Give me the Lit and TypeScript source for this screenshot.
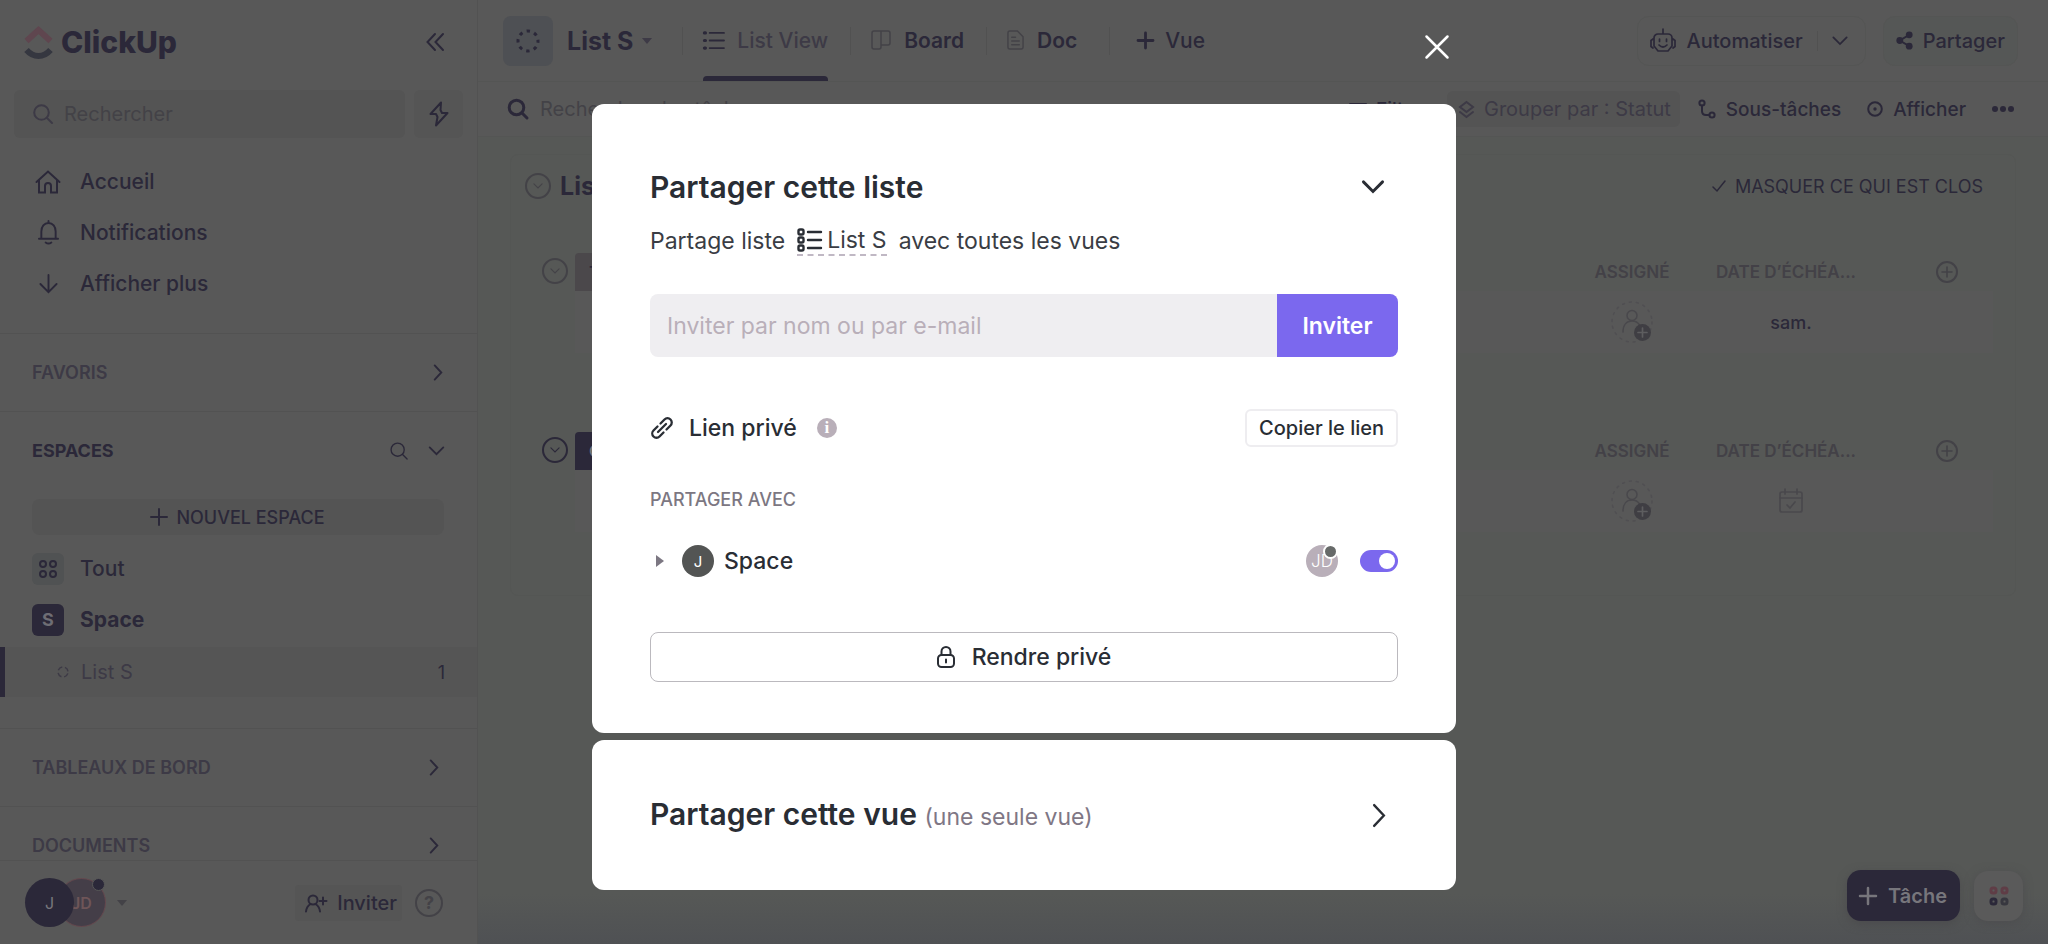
import { LitElement, html, css, svg } from "lit";
import { customElement, property, state } from "lit/decorators.js";
import { classMap } from "lit/directives/class-map.js";

/* Stroke icons, each drawn on its own view box. */
const ICONS: Record<string, { box: string; body: unknown }> = {
  collapse: { box: "0 0 18 18", body: svg`<path d="M9 1 1.500 9 9 17M17 1 9.500 9 17 17"/>` },
  search: { box: "0 0 20 20", body: svg`<circle cx="8.500" cy="8.500" r="7.300"/><path d="m14 14 5 5"/>` },
  bolt: { box: "0 0 20 26", body: svg`<path d="M12 1.500 1.500 13H7l1.500 3-1.500 8.500L18.500 12H13l-1.500-3z" stroke-linejoin="round"/>` },
  home: { box: "0 0 26 24", body: svg`<path d="M1.500 12 13 1.500 24.500 12M4 10v12.500h6V16c0-2 1.200-3 3-3s3 1 3 3v6.500h6V10"/>` },
  bell: { box: "0 0 22 26", body: svg`<path d="M1 19.500h20M3.500 19V12c0-5 3-9 7.500-9s7.500 4 7.500 9v7M11 3V1M8 23.500c2 1.500 4 1.500 6 0"/>` },
  down: { box: "0 0 20 20", body: svg`<path d="M10 1v17.500M1.500 10.500 10 19l8.500-8.500"/>` },
  right: { box: "0 0 10 18", body: svg`<path d="M1.500 1.500 8.500 9l-7 7.500"/>` },
  chevron: { box: "0 0 18 11", body: svg`<path d="m1.500 1.500 7.500 7.500 7.500-7.500"/>` },
  plus: { box: "0 0 16 16", body: svg`<path d="M8 0v16M0 8h16"/>` },
  grid: { box: "0 0 18 18", body: svg`<circle cx="4" cy="4" r="3"/><circle cx="14" cy="4" r="3"/><circle cx="4" cy="14" r="3"/><circle cx="14" cy="14" r="3"/>` },
  ring: { box: "0 0 24 24", body: svg`<circle cx="12" cy="12" r="10" stroke-linecap="butt" stroke-dasharray="3.400 4.454" stroke-dashoffset="1.700"/>` },
  ringSmall: { box: "0 0 12 12", body: svg`<circle cx="6" cy="6" r="5" stroke-linecap="butt" stroke-dasharray="5 2.854" stroke-dashoffset="6.400"/>` },
  list: { box: "0 0 22 20", body: svg`<path d="M7 2h15M7 10h15M7 18h15"/><path d="M1.500 2h1M1.500 10h1M1.500 18h1" stroke-width="3.400"/>` },
  board: { box: "0 0 20 20", body: svg`<path d="M10 1H3a2 2 0 0 0-2 2v14a2 2 0 0 0 2 2h5a2 2 0 0 0 2-2V1h7a2 2 0 0 1 2 2v10a2 2 0 0 1-2 2h-7"/>` },
  doc: { box: "0 0 18 21" , body: svg`<path d="M3 1h8l6 6v11a2 2 0 0 1-2 2H3a2 2 0 0 1-2-2V3a2 2 0 0 1 2-2zM5 7.500h4M5 11.500h8M5 15.500h8"/>` },
  robot: { box: "0 0 26 24", body: svg`<path d="M13 0v5M8 5h10a4 4 0 0 1 4 4v8l-4 5H8l-4-5V9a4 4 0 0 1 4-4zM3 10 1 11.500v6L3 19M23 10l2 1.500v6L23 19M9.500 10v2.500M16.500 10v2.500M9 16c2.500 2.500 5.500 2.500 8 0"/>` },
  share: { box: "0 0 18 20", body: svg`<path d="M14 4 4 10l10 6"/><g fill="currentColor" stroke="none"><circle cx="14" cy="4" r="3.600"/><circle cx="4" cy="10" r="3.600"/><circle cx="14" cy="16" r="3.600"/></g>` },
  filter: { box: "0 0 16 12", body: svg`<path d="M0 1h16M3 6h10M6 11h4"/>` },
  layers: { box: "0 0 15 17", body: svg`<path d="M7.500 1 14 6l-6.500 5L1 6zM1 11l6.500 5 6.500-5"/>` },
  branch: { box: "0 0 18 20", body: svg`<circle cx="4" cy="4" r="2.600"/><circle cx="14" cy="16" r="2.600"/><path d="M4 6.600V12c0 3 1.500 4 4 4h3.400"/>` },
  eye: { box: "0 0 16 16", body: svg`<circle cx="8" cy="8" r="6.800"/><circle cx="8" cy="8" r="1.700" fill="currentColor" stroke="none"/>` },
  dots: { box: "0 0 22 6", body: svg`<g fill="currentColor" stroke="none"><circle cx="3" cy="3" r="3"/><circle cx="11" cy="3" r="3"/><circle cx="19" cy="3" r="3"/></g>` },
  check: { box: "0 0 14 12", body: svg`<path d="m1 7 4 4 8-10"/>` },
  calendar: { box: "0 0 24 24", body: svg`<rect x="1" y="3" width="22" height="20" rx="2"/><path d="M1 9h22M6 0v5M18 0v5M8 16l3 3 5-6"/>` },
  person: { box: "0 0 42 42", body: svg`<circle cx="21" cy="21" r="20" stroke-dasharray="2 5" stroke="#504f52"/><circle cx="21" cy="14.500" r="5"/><path d="M12 31c0-7 3.500-11 9-11 3.500 0 6 1.500 7.500 4"/>` },
  invite: { box: "0 0 22 18", body: svg`<circle cx="8" cy="6" r="4.500"/><path d="M1 17.500c.5-4 2-6 4.500-7.500M15 17.500c-.5-4-2-6-4.500-7.500M14.500 7h7M18 3.500v7"/>` },
  close: { box: "0 0 24 24", body: svg`<path d="m1.500 1.500 21 21M22.500 1.500l-21 21"/>` },
  bullets: { box: "0 0 24 24", body: svg`<rect x="1.500" y="1.500" width="5" height="5" rx="1.500"/><rect x="1.500" y="9.500" width="5" height="5" rx="1.500"/><rect x="1.500" y="17.500" width="5" height="5" rx="1.500"/><path d="M11 4h13M11 12h13M11 20h13"/>` },
  link: { box: "0 0 24 24", body: svg`<path d="m8 16 8-8M10.500 7.500l4-4a4.200 4.200 0 0 1 6 6l-4 4M13.500 16.500l-4 4a4.200 4.200 0 0 1-6-6l4-4"/>` },
  lock: { box: "0 0 18 22", body: svg`<rect x="1" y="9" width="16" height="12" rx="3.500"/><path d="M4.500 9V5.500a4.500 4.500 0 0 1 9 0V9M9 13.500v3"/>` },
};

const icon = (name: string, width: number, height: number, stroke = 2) => html`<svg
  width=${width} height=${height} viewBox=${ICONS[name].box} fill="none" stroke="currentColor"
  stroke-width=${stroke} stroke-linecap="round" aria-hidden="true">${ICONS[name].body}</svg>`;

const base = css`
  * { box-sizing: border-box; margin: 0; }
  :host {
    box-sizing: border-box;
    display: block;
    --ink: #2b2839;
    --soft: #3d3a46;
    --faint: #434247;
    --pane: #585858;
    --line: #525252;
    --accent: #7b68ee;
    font-family: Inter, "Open Sans", sans-serif;
    color: var(--ink);
  }
  button, input { font: inherit; color: inherit; border: 0; background: none; padding: 0; }
  button { display: flex; align-items: center; cursor: pointer; white-space: nowrap; }
  a { color: inherit; text-decoration: none; }
  svg { display: block; flex: none; overflow: visible; }
  .grow { flex: 1; min-width: 0; }
`;

@customElement("side-bar")
class SideBar extends LitElement {
  static styles = [base, css`
    :host { height: 100%; background: var(--pane); border-right: 1px solid var(--line); min-width: 0; }
    .bar { display: flex; flex-direction: column; height: 100%; }
    .scroll { flex: 1; min-height: 0; overflow: hidden; }
    .brand { display: flex; align-items: center; justify-content: space-between; height: 84px; padding: 0 33px 0 24px; }
    .logo { display: flex; align-items: center; gap: 8px; font-size: 30px; line-height: 36px; font-weight: 800; }
    .search { display: flex; gap: 9px; height: 48px; margin: 6px 14px 18px; }
    .field { display: flex; align-items: center; flex: 1; min-width: 0; gap: 11px; padding: 0 19px; border-radius: 6px; background: #545454; color: var(--soft); font-size: 20px; }
    .field input { flex: 1; min-width: 0; outline: 0; }
    .field input::placeholder { color: #434247; opacity: 1; }
    .zap { width: 49px; justify-content: center; border-radius: 6px; background: #555; }
    .item { display: flex; align-items: center; height: 51px; padding: 0 32px; gap: 16px; font-size: 21px; font-weight: 500; }
    .slot { display: flex; justify-content: center; align-items: center; width: 32px; height: 32px; border-radius: 6px; flex: none; }
    .all { background: #505253; }
    .initial { background: var(--ink); color: #6e6d74; font-size: 18px; font-weight: 700; }
    .strong { font-weight: 700; }
    .nav { padding-bottom: 24px; }
    .section { display: flex; align-items: center; gap: 20px; width: 100%; height: 78px; padding: 0 34px 0 32px; border-top: 1px solid var(--line); font-size: 18px; font-weight: 600; color: var(--soft); }
    .section svg { color: var(--ink); }
    .low { padding-right: 38px; }
    .open { padding-right: 32px; color: var(--ink); font-weight: 700; }
    .new { width: calc(100% - 65px); margin: 10px 32px 8px; height: 36px; justify-content: center; gap: 9px; border-radius: 8px; background: #545454; font-size: 18px; font-weight: 500; }
    .current { display: flex; align-items: center; gap: 12px; height: 50px; margin: 2px 0 31px; padding: 0 32px 0 52px; border-left: 5px solid var(--ink); background: #555; color: var(--soft); font-size: 20px; }
    .count { font-size: 18px; color: var(--ink); }
    .foot { display: flex; align-items: center; height: 84px; padding: 0 34px 0 25px; border-top: 1px solid var(--line); }
    .faces { display: flex; align-items: center; position: relative; font-size: 16px; }
    .me, .other { display: grid; place-items: center; width: 49px; height: 49px; border-radius: 50%; }
    .me { background: var(--ink); color: #77767c; z-index: 1; }
    .other { margin-left: -17px; background: #443e48; color: #6e5558; border: 1px solid #65484e; font-weight: 600; }
    .dot { position: absolute; z-index: 1; top: 0; right: 1px; width: 13px; height: 13px; border-radius: 50%; background: var(--ink); border: 1px solid var(--pane); }
    .caret { border: 5px solid transparent; border-top: 6px solid var(--faint); border-bottom: 0; margin-left: 11px; }
    .invite { height: 36px; padding: 0 5px 0 10px; gap: 10px; background: #555; font-size: 20px; font-weight: 500; border-radius: 4px; }
    .help { width: 28px; height: 28px; justify-content: center; margin-left: 13px; border: 2px solid var(--faint); border-radius: 50%; color: var(--faint); font-size: 18px; font-weight: 700; }
  `];

  render() {
    const nav: [string, string, number, number][] = [
      ["home", "Accueil", 26, 24], ["bell", "Notifications", 21, 25], ["down", "Afficher plus", 19, 19],
    ];
    return html`<nav class="bar">
      <div class="scroll">
        <div class="brand">
          <a class="logo" href="#">
            <svg width="29" height="36" viewBox="0 0 29 36" fill="none" stroke-width="6">
              <path d="M2.500 17 14.500 6l12 11" stroke="#5f464f"/>
              <path d="M2.500 26c7 8 17 8 24 0" stroke="#353740"/>
            </svg>
            <span>ClickUp</span>
          </a>
          <button aria-label="Réduire">${icon("collapse", 18, 18)}</button>
        </div>
        <div class="search">
          <label class="field">${icon("search", 20, 20)}<input type="search" placeholder="Rechercher" aria-label="Rechercher" /></label>
          <button class="zap" aria-label="Actions rapides">${icon("bolt", 20, 26)}</button>
        </div>
        <div class="nav">
          ${nav.map(([name, label, w, h]) => html`<a class="item" href="#"><span class="slot">${icon(name, w, h)}</span>${label}</a>`)}
        </div>
        <button class="section"><span>FAVORIS</span><span class="grow"></span>${icon("right", 10, 17)}</button>
        <div class="section open"><span class="grow">ESPACES</span>
          <button aria-label="Rechercher un espace">${icon("search", 18, 18, 1.5)}</button>
          <button aria-label="Replier">${icon("chevron", 17, 10)}</button></div>
        <button class="new">${icon("plus", 16, 16)}NOUVEL ESPACE</button>
        <a class="item" href="#"><span class="slot all">${icon("grid", 18, 18)}</span>Tout</a>
        <a class="item strong" href="#"><span class="slot initial">S</span>Space</a>
        <a class="current" href="#">${icon("ringSmall", 12, 12, 1.5)}<span class="grow">List S</span><span class="count">1</span></a>
        <button class="section low"><span>TABLEAUX DE BORD</span><span class="grow"></span>${icon("right", 10, 17)}</button>
        <button class="section low"><span>DOCUMENTS</span><span class="grow"></span>${icon("right", 10, 17)}</button>
      </div>
      <div class="foot">
        <div class="faces"><span class="me">J</span><span class="other">JD</span><span class="dot"></span></div>
        <span class="caret"></span>
        <span class="grow"></span>
        <button class="invite">${icon("invite", 22, 18)}Inviter</button>
        <button class="help" aria-label="Aide">?</button>
      </div>
    </nav>`;
  }
}

@customElement("list-view")
class ListView extends LitElement {
  static styles = [base, css`
    :host { height: 100%; min-width: 0; background: linear-gradient(#565856 calc(100% - 50px), #4f5154); }
    .top, .tools { display: flex; align-items: center; background: var(--pane); border-bottom: 1px solid #545554; }
    .top { height: 82px; padding: 0 30px 0 25px; font-size: 20px; }
    .tools { height: 55px; padding: 0 34px 0 30px; font-size: 19px; font-weight: 500; }
    .glyph { display: grid; place-items: center; width: 50px; height: 50px; margin-right: 14px; border-radius: 8px; background: #4e5054; }
    .name { font-size: 25px; font-weight: 700; gap: 9px; margin-right: 30px; }
    .caret { border: 5px solid transparent; border-top: 6px solid var(--soft); border-bottom: 0; }
    .sep { width: 1px; height: 28px; background: #515151; flex: none; }
    .tab { position: relative; height: 81px; margin: 0 22px 0 20px; padding-bottom: 1px; gap: 13px; font-size: 21px; font-weight: 600; }
    .tab svg { color: var(--faint); }
    .on { font-weight: 500; color: var(--soft); }
    .on svg { color: var(--ink); }
    .on::after { content: ""; position: absolute; left: 0; right: 0; bottom: 0; height: 5px; background: var(--ink); border-radius: 4px 4px 0 0; }
    .last { margin-right: 32px; }
    .view { gap: 12px; margin-left: 28px; font-size: 21px; font-weight: 500; }
    .box { height: 50px; border: 1px solid #545554; border-radius: 12px; padding: 0 12px; font-weight: 500; }
    .auto { display: flex; align-items: center; gap: 14px; padding-right: 17px; }
    .auto button { gap: 11px; }
    .auto .sep { height: 20px; }
    .shared { margin-left: 17px; gap: 10px; background: #555756; }
    .field { display: flex; align-items: center; gap: 12px; flex: 1; font-size: 20px; }
    .field input { width: 260px; outline: 0; font-weight: 400; }
    .field input::placeholder { color: #434247; opacity: 1; }
    .tool { gap: 10px; margin-left: 26px; }
    .group { height: 36px; margin-left: 18px; padding: 0 9px 0 12px; margin-right: -8px; background: #545454; border-radius: 6px; font-size: 20px; font-weight: 400; color: var(--soft); }
    .panel { margin: 17px 32px 0; padding: 0 22px 63px 31px; border: 1px solid #545654; border-radius: 8px; }
    .head { display: flex; align-items: center; gap: 9px; height: 62px; margin-left: -17px; margin-bottom: 36px; }
    h1 { font-size: 25px; line-height: 32px; font-weight: 700; }
    .hide { margin-right: 10px; gap: 9px; font-size: 18px; font-weight: 400; }
    .round { width: 26px; height: 26px; justify-content: center; border: 2px solid var(--faint); border-radius: 50%; color: var(--faint); flex: none; }
    .dark { color: var(--ink); border-color: var(--ink); }
    .set { display: grid; grid-template-columns: 26px minmax(0, 1fr); gap: 7px; margin-bottom: 79px; }
    .set:last-child { margin-bottom: 0; }
    .set > .round { margin-top: 5px; }
    table { width: 100%; table-layout: fixed; border-collapse: collapse; text-align: center; }
    th { height: 38px; padding: 0; font-size: 17px; font-weight: 600; color: #434147; white-space: nowrap; }
    th:first-child { text-align: left; vertical-align: top; }
    .tag { display: block; width: fit-content; height: 38px; padding: 0 14px; line-height: 38px; border-radius: 4px 4px 0 0; font-size: 16px; background: #4b484b; color: var(--ink); }
    .full { background: var(--ink); color: #77767c; }
    td { height: 62px; padding: 0; background: #585858; font-size: 18px; font-weight: 500; }
    .mid { display: flex; justify-content: center; align-items: center; position: relative; }
    .due { padding-left: 10px; }
    .who { color: #49484c; }
    td .mid { margin: 0 auto; }
    .badge { position: absolute; right: 2px; bottom: 2px; display: grid; place-items: center; width: 17px; height: 17px; border-radius: 50%; background: #3f3e43; color: #5d5d5f; }
    .c1 { width: 78px; } .c2 { width: 230px; } .c3 { width: 92px; }
    .ring { width: 22px; height: 22px; }
  `];

  private group(tag: string, dark: boolean, due: unknown) {
    return html`<section class="set">
      <button class=${classMap({ round: true, dark })} aria-label="Replier le groupe">${icon("chevron", 10, 6)}</button>
      <table>
        <colgroup><col /><col class="c1" /><col class="c2" /><col class="c3" /></colgroup>
        <thead><tr>
          <th><span class=${classMap({ tag: true, full: dark })}>${tag}</span></th>
          <th>ASSIGNÉ</th><th>DATE D’ÉCHÉA...</th>
          <th><div class="mid"><button class="round ring" aria-label="Ajouter une colonne">${icon("plus", 10, 10, 2.5)}</button></div></th>
        </tr></thead>
        <tbody><tr>
          <td></td>
          <td><button class="mid who" aria-label="Assigner">${icon("person", 42, 42, 1.5)}<span class="badge">${icon("plus", 9, 9, 3)}</span></button></td>
          <td><div class="mid due">${due}</div></td>
          <td></td>
        </tr></tbody>
      </table>
    </section>`;
  }

  render() {
    return html`
      <header class="top">
        <span class="glyph">${icon("ring", 24, 24, 3)}</span>
        <button class="name">List S<span class="caret"></span></button>
        <span class="sep"></span>
        <button class="tab on">${icon("list", 21, 19)}List View</button>
        <span class="sep"></span>
        <button class="tab">${icon("board", 20, 20, 1.5)}Board</button>
        <span class="sep"></span>
        <button class="tab last">${icon("doc", 17, 20, 1.5)}Doc</button>
        <span class="sep"></span>
        <button class="view">${icon("plus", 15, 15, 3)}Vue</button>
        <span class="grow"></span>
        <div class="box auto">
          <button>${icon("robot", 26, 24, 1.7)}Automatiser</button>
          <span class="sep"></span>
          <button aria-label="Options">${icon("chevron", 16, 10)}</button>
        </div>
        <button class="box shared">${icon("share", 17, 19)}Partager</button>
      </header>
      <div class="tools">
        <label class="field">${icon("search", 20, 20, 3)}<input type="search" placeholder="Rechercher des tâches" aria-label="Rechercher des tâches" /></label>
        <button class="tool">${icon("filter", 16, 12)}Filtrer</button>
        <button class="tool group">${icon("layers", 15, 17)}Grouper par : Statut</button>
        <button class="tool">${icon("branch", 18, 20)}Sous-tâches</button>
        <button class="tool">${icon("eye", 16, 16)}Afficher</button>
        <button class="tool" aria-label="Plus">${icon("dots", 22, 6)}</button>
      </div>
      <main class="panel">
        <div class="head">
          <button class="round" aria-label="Replier la liste">${icon("chevron", 10, 6)}</button>
          <h1 class="grow">List S</h1>
          <button class="hide">${icon("check", 14, 12, 1.5)}MASQUER CE QUI EST CLOS</button>
        </div>
        ${this.group("TO DO", false, "sam.")}
        ${this.group("CLOSED", true, html`<span class="who">${icon("calendar", 24, 24, 1.7)}</span>`)}
      </main>`;
  }
}

@customElement("share-dialog")
class ShareDialog extends LitElement {
  @property({ type: Boolean }) shared = true;
  @state() private email = "";

  static styles = [base, css`
    :host { width: 864px; max-width: 100%; color: #292d34; }
    .stack { display: flex; flex-direction: column; gap: 7px; }
    .card { padding: 0 58px; background: #fff; border-radius: 12px; }
    .first { padding-top: 64px; padding-bottom: 51px; }
    .second { display: flex; align-items: center; height: 150px; }
    .row { display: flex; align-items: center; }
    h2 { font-size: 30px; line-height: 38px; font-weight: 600; flex: 1; }
    h2 small { font-size: 23px; font-weight: 400; color: #7f7785; }
    .toggle { width: 50px; height: 38px; justify-content: center; }
    .second .toggle { width: 38px; }
    .about { display: flex; align-items: center; margin-top: 20px; font-size: 23px; line-height: 28px; color: #3a3d44; }
    .target { display: flex; align-items: center; gap: 6px; margin: 0 12px; border-bottom: 2px dashed #c0b8c4; }
    .target svg { color: #292d34; }
    .form { display: flex; height: 63px; margin-top: 38px; border-radius: 8px; overflow: hidden; font-size: 23px; }
    .form input { flex: 1; min-width: 0; padding: 0 17px; background: #efeef1; outline: 0; }
    .form input::placeholder { color: #b9afb9; opacity: 1; }
    .form button { width: 121px; justify-content: center; background: var(--accent); color: #fff; font-weight: 600; }
    .private { margin-top: 52px; gap: 15px; font-size: 23px; font-weight: 500; }
    .info { display: grid; place-items: center; width: 20px; height: 20px; margin-left: 5px; border-radius: 50%; background: #b9afb9; color: #fff; font: 700 17px/20px "Liberation Serif", serif; }
    .copy { height: 38px; padding: 0 12px; border: 2px solid #eeedf0; border-radius: 6px; font-size: 20px; font-weight: 500; }
    h3 { margin-top: 42px; font-size: 18px; line-height: 22px; font-weight: 500; color: #7c7782; }
    .space { height: 34px; margin-top: 33px; font-size: 23px; font-weight: 500; }
    .tri { border: 6px solid transparent; border-left: 8px solid #7c7782; border-right: 0; margin: 0 18px 0 6px; }
    .face { display: grid; place-items: center; position: relative; width: 32px; height: 32px; border-radius: 50%; background: #535554; color: #fff; font-size: 15px; font-weight: 400; margin-right: 10px; }
    .guest { background: #b9afb9; font-size: 17px; font-weight: 300; margin-right: 22px; }
    .dot { position: absolute; top: -1px; right: 0; width: 15px; height: 15px; border: 2px solid #fff; border-radius: 50%; background: #676a69; }
    .switch { appearance: none; display: flex; align-items: center; width: 38px; height: 22px; padding: 3px; border-radius: 11px; background: #c7c5cb; cursor: pointer; }
    .switch::before { content: ""; width: 16px; height: 16px; border-radius: 50%; background: #fff; }
    .switch:checked { justify-content: flex-end; background: var(--accent); }
    .lock { width: 100%; height: 50px; margin-top: 54px; justify-content: center; gap: 17px; border: 1px solid #bbb9be; border-radius: 8px; font-size: 23px; font-weight: 500; }
  `];

  render() {
    return html`<div class="stack" role="dialog" aria-label="Partager cette liste">
      <section class="card first">
        <div class="row"><h2>Partager cette liste</h2>
          <button class="toggle" aria-label="Replier">${icon("chevron", 24, 14, 2.3)}</button></div>
        <p class="about">Partage liste <a class="target" href="#">${icon("bullets", 24, 24, 2.4)}List S</a>avec toutes les vues</p>
        <form class="form" @submit=${(e: Event) => e.preventDefault()}>
          <input type="text" aria-label="Inviter par nom ou par e-mail" placeholder="Inviter par nom ou par e-mail"
            .value=${this.email} @input=${(e: Event) => (this.email = (e.target as HTMLInputElement).value)} />
          <button type="submit">Inviter</button>
        </form>
        <div class="row private">${icon("link", 24, 24, 2.3)}<span>Lien privé</span><span class="info">i</span>
          <span class="grow"></span><button class="copy">Copier le lien</button></div>
        <h3>PARTAGER AVEC</h3>
        <div class="row space">
          <button aria-label="Développer"><span class="tri"></span></button>
          <span class="face">J</span><label class="grow" for="shared">Space</label>
          <span class="face guest">JD<span class="dot"></span></span>
          <input class="switch" id="shared" type="checkbox" .checked=${this.shared}
            @change=${(e: Event) => (this.shared = (e.target as HTMLInputElement).checked)} />
        </div>
        <button class="lock">${icon("lock", 18, 22)}Rendre privé</button>
      </section>
      <section class="card second">
        <h2>Partager cette vue <small>(une seule vue)</small></h2>
        <button class="toggle" aria-label="Développer">${icon("right", 14, 25, 1.7)}</button>
      </section>
    </div>`;
  }
}

@customElement("app-root")
class AppRoot extends LitElement {
  static styles = [base, css`
    :host { position: relative; height: 100vh; overflow: hidden; }
    .shell { display: grid; grid-template-columns: 478px minmax(0, 1fr); grid-template-rows: 100%; height: 100%; }
    .overlay { position: absolute; inset: 0; display: flex; justify-content: center; align-items: flex-start; padding-top: 104px; }
    .wrap { position: relative; max-width: 100%; }
    .close { position: absolute; right: 7px; bottom: calc(100% + 45px); color: #fff; }
    .fab { position: absolute; right: 25px; bottom: 23px; display: flex; gap: 14px; align-items: flex-end; }
    .task { height: 51px; padding: 0 13px; gap: 12px; border-radius: 14px; background: var(--ink); color: #77767c; font-size: 20px; font-weight: 600; box-shadow: 0 3px 10px #4b4b4d; }
    .apps { width: 49px; height: 50px; justify-content: center; border-radius: 14px; background: #5a5a5a; box-shadow: 0 2px 10px #4d4d4f; }
  `];

  render() {
    return html`
      <div class="shell"><side-bar></side-bar><list-view></list-view></div>
      <div class="fab">
        <button class="task">${icon("plus", 16, 16, 2.5)}Tâche</button>
        <button class="apps" aria-label="Applications">
          <svg width="20" height="20" viewBox="0 0 20 20" fill="none" stroke-width="3">
            <rect x="2" y="2" width="5" height="5" rx="2" stroke="#5f3d46"/><rect x="13" y="2" width="5" height="5" rx="2" stroke="#5f3d46"/>
            <rect x="2" y="13" width="5" height="5" rx="2" stroke="#2b2839"/><rect x="13" y="13" width="5" height="5" rx="2" stroke="#37373f"/>
          </svg>
        </button>
      </div>
      <div class="overlay"><div class="wrap">
        <share-dialog></share-dialog>
        <button class="close" aria-label="Fermer">${icon("close", 24, 24, 2.5)}</button>
      </div></div>`;
  }
}
